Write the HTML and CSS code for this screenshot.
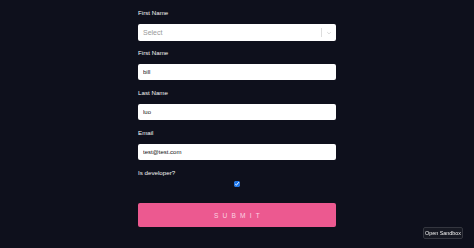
FILE: index.html
```html
<!DOCTYPE html>
<html>
<head>
<meta charset="utf-8">
<link rel="stylesheet" href="styles.css">
</head>
<body>
<form class="form">
  <label class="label">First Name</label>
  <div class="select">
    <span class="placeholder">Select</span>
    <span class="sep"></span>
    <svg class="chev" viewBox="0 0 10 10" width="6" height="6"><path d="M2 3.5 L5 6.5 L8 3.5" fill="none" stroke="#ccc" stroke-width="1.2"/></svg>
  </div>
  <label class="label">First Name</label>
  <input class="input" value="bill">
  <label class="label">Last Name</label>
  <input class="input" value="luo">
  <label class="label">Email</label>
  <input class="input" value="test@test.com">
  <label class="label">Is developer?</label>
  <div class="checkrow"><input type="checkbox" class="check" checked></div>
  <button type="button" class="submit">Submit</button>
</form>
<button type="button" class="sandbox">Open Sandbox</button>
</body>
</html>
```
FILE: styles.css
```css
html, body {
  margin: 0;
  padding: 0;
  background: #0e101c;
  height: 100%;
}
body {
  font-family: "Liberation Sans", Arial, sans-serif;
  color: #fff;
}
.form {
  width: 198px;
  margin: 0 auto;
  padding-top: 8px;
  display: flex;
  flex-direction: column;
}
.label {
  display: block;
  font-size: 6.2px;
  line-height: 10px;
  margin-bottom: 6px;
  color: #f4f4f4;
}
.input, .select {
  box-sizing: border-box;
  height: 16px;
  width: 100%;
  border: 0;
  border-radius: 2px;
  background: #fff;
  padding: 0 5px;
  margin: 0 0 8px 0;
  font-family: "Liberation Sans", Arial, sans-serif;
  font-size: 6px;
  color: #111;
  outline: none;
}
.select {
  display: flex;
  align-items: center;
  height: 17px;
  padding-right: 0;
  margin-bottom: 7px;
}
.placeholder {
  flex: 1;
  color: #999;
  font-size: 7px;
}
.sep {
  width: 1px;
  height: 9px;
  background: #ddd;
}
.chev {
  margin: 0 4px 0 4px;
}
.checkrow {
  display: flex;
  justify-content: center;
  height: 9px;
  margin-top: -3px;
}
.check {
  margin: 0;
  width: 6px;
  height: 6px;
  accent-color: #1a73e8;
}
.submit {
  margin-top: 13px;
  height: 24px;
  border: 0;
  border-radius: 2px;
  background: #ec5990;
  color: #fbd3e2;
  font-family: "Liberation Sans", Arial, sans-serif;
  font-size: 6.6px;
  letter-spacing: 4.2px;
  text-transform: uppercase;
  padding: 0 0 0 4px;
}
.sandbox {
  position: fixed;
  right: 11px;
  bottom: 9px;
  width: 40px;
  height: 12px;
  padding: 0;
  border: 1px solid #34363f;
  border-radius: 2px;
  background: #161822;
  color: #f0f0f0;
  font-family: "Liberation Sans", Arial, sans-serif;
  font-size: 5.4px;
}
```
